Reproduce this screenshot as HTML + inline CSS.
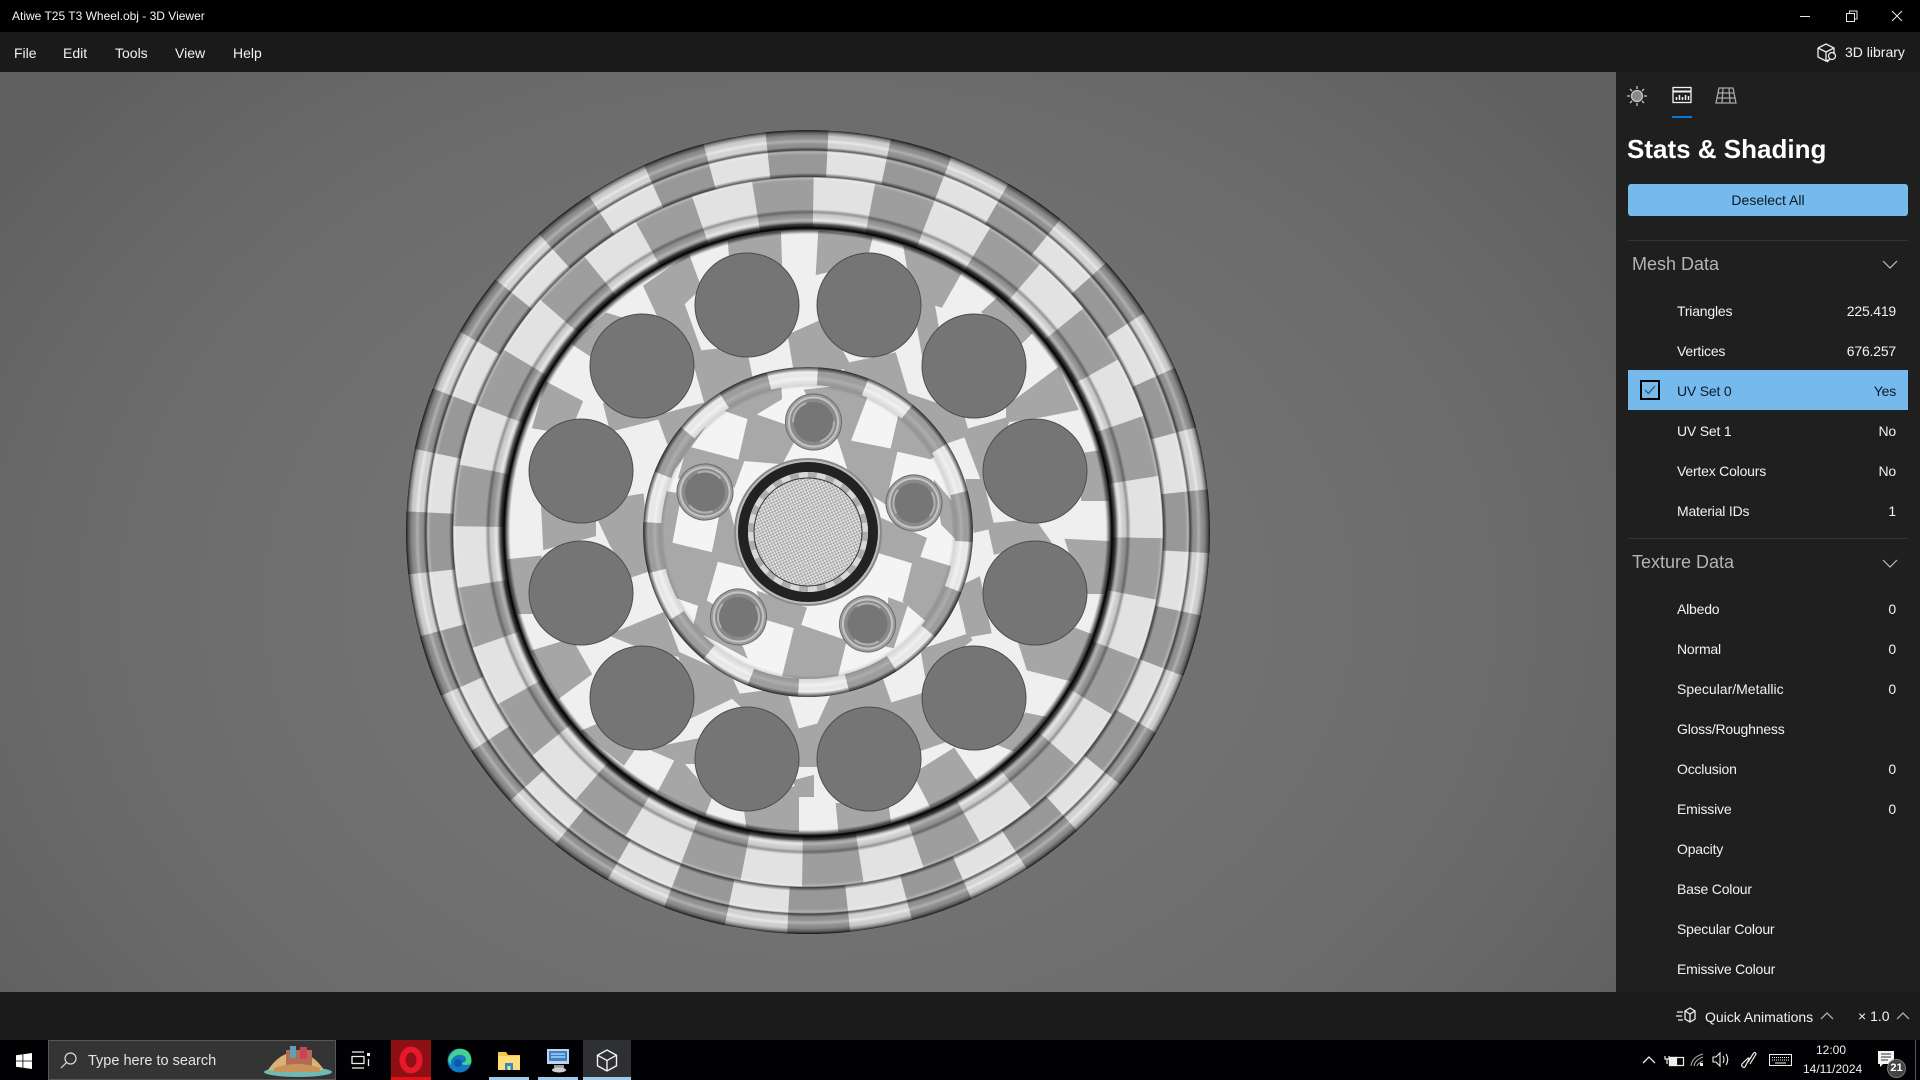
<!DOCTYPE html>
<html><head><meta charset="utf-8"><title>3D Viewer</title>
<style>
html,body{margin:0;padding:0;width:1920px;height:1080px;overflow:hidden;background:#000;font-family:"Liberation Sans",sans-serif}
.a{position:absolute}
.t{position:absolute;white-space:nowrap;line-height:20px;height:20px;font-size:14px;color:#f2f2f2}
.r{text-align:right;right:24px;letter-spacing:-.2px}
.l{left:1677px;letter-spacing:-.2px}
svg{position:absolute;overflow:visible}
</style></head><body>
<div class="a" style="left:0;top:0;width:1920px;height:32px;background:#000"></div>
<div class="t" style="left:12px;top:6px;font-size:12px;color:#f4f4f4">Atiwe T25 T3 Wheel.obj - 3D Viewer</div>
<svg style="left:0;top:0" width="1920" height="32" fill="none" stroke="#e8e8e8" stroke-width="1"><path d="M1800 16.5h10"/><path d="M1846.5 13.5h8v8h-8zM1849.5 13.5v-2.5h7.500v8h-2"/><path d="M1892 11l10 10M1902 11l-10 10"/></svg>

<div class="a" style="left:0;top:32px;width:1920px;height:40px;background:#1a1a1a"></div>
<div class="t" style="left:14px;top:43px">File</div>
<div class="t" style="left:63px;top:43px">Edit</div>
<div class="t" style="left:115px;top:43px">Tools</div>
<div class="t" style="left:175px;top:43px">View</div>
<div class="t" style="left:233px;top:43px">Help</div>
<svg style="left:1816px;top:42px" width="26" height="22" fill="none" stroke="#eee" stroke-width="1.300"><path d="M2 6l8-4 8 4v6M2 6v9l8 4 2-1M2 6l8 4 8-4M10 10v9"/><circle cx="16" cy="14" r="3.500"/><path d="M14 17l-3 3"/></svg>
<div class="t" style="left:1845px;top:42px">3D library</div>

<div class="a" style="left:0;top:72px;width:1616px;height:920px;background:radial-gradient(ellipse 1000px 760px at 808px 532px,#747474 0%,#717171 45%,#6a6a6a 75%,#5f5f5f 100%)"></div>

<svg style="left:0;top:0" width="1616" height="992" viewBox="0 0 1616 992">
<defs>
<radialGradient id="rim" gradientUnits="userSpaceOnUse" cx="808" cy="532" r="402">
<stop offset=".741" stop-color="#000" stop-opacity="0"/>
<stop offset=".749" stop-color="#000" stop-opacity=".5"/>
<stop offset=".756" stop-color="#000" stop-opacity="1"/>
<stop offset=".766" stop-color="#000" stop-opacity=".6"/>
<stop offset=".776" stop-color="#fff" stop-opacity=".2"/>
<stop offset=".789" stop-color="#000" stop-opacity=".1"/>
<stop offset=".796" stop-color="#000" stop-opacity=".35"/>
<stop offset=".803" stop-color="#000" stop-opacity="0"/>
<stop offset=".874" stop-color="#fff" stop-opacity="0"/>
<stop offset=".880" stop-color="#fff" stop-opacity=".25"/>
<stop offset=".884" stop-color="#000" stop-opacity=".6"/>
<stop offset=".893" stop-color="#000" stop-opacity="0"/>
<stop offset=".938" stop-color="#fff" stop-opacity="0"/>
<stop offset=".9455" stop-color="#fff" stop-opacity=".25"/>
<stop offset=".950" stop-color="#000" stop-opacity=".6"/>
<stop offset=".958" stop-color="#000" stop-opacity=".05"/>
<stop offset=".972" stop-color="#fff" stop-opacity=".25"/>
<stop offset=".985" stop-color="#000" stop-opacity=".1"/>
<stop offset=".9935" stop-color="#000" stop-opacity=".4"/>
<stop offset="1" stop-color="#000" stop-opacity=".85"/>
</radialGradient>
<radialGradient id="boss" gradientUnits="userSpaceOnUse" cx="808" cy="532" r="165">
<stop offset=".87" stop-color="#000" stop-opacity="0"/>
<stop offset=".885" stop-color="#000" stop-opacity=".1"/>
<stop offset=".93" stop-color="#fff" stop-opacity=".15"/>
<stop offset=".97" stop-color="#000" stop-opacity="0"/>
<stop offset="1" stop-color="#000" stop-opacity=".75"/>
</radialGradient>
<pattern id="mesh" width="4" height="4" patternUnits="userSpaceOnUse" patternTransform="rotate(20)">
<rect width="4" height="4" fill="#e4e4e4"/><rect width="2" height="2" fill="#a8a8a8"/><rect x="2" y="2" width="2" height="2" fill="#a8a8a8"/>
</pattern>
<clipPath id="cd"><circle cx="808" cy="532" r="302"/></clipPath>
<clipPath id="cb"><circle cx="808" cy="532" r="150"/></clipPath>
<g id="bolt">
<circle r="28" fill="#9c9c9c" stroke="#6a6a6a" stroke-width="1"/>
<circle r="24.500" fill="#8a8a8a" stroke="#c4c4c4" stroke-width="2"/>
<circle r="20" fill="#767676"/>
<circle r="20.500" fill="none" stroke="#b2b2b2" stroke-width="2" pathLength="360" stroke-dasharray="70 110"/>
</g>
</defs>

<circle cx="808" cy="532" r="402" fill="#989898"/>
<circle cx="808" cy="532" r="378.500" fill="none" stroke="#e2e2e2" stroke-width="47" pathLength="360" stroke-dasharray="9 9" stroke-dashoffset="-3"/>
<circle cx="808" cy="532" r="329.500" fill="none" stroke="#9e9e9e" stroke-width="51"/>
<circle cx="808" cy="532" r="329.500" fill="none" stroke="#e2e2e2" stroke-width="51" pathLength="360" stroke-dasharray="10 10" stroke-dashoffset="-11"/>
<circle cx="808" cy="532" r="304" fill="#efefef"/>

<g clip-path="url(#cd)" fill="#a6a6a6" stroke="#a6a6a6" stroke-width="8" stroke-linejoin="miter">
<polygon points="732,243 777,233 778,263 733,257"/>
<polygon points="648,287 687,260 697,287 678,305 660,313"/>
<polygon points="577,343 607,317 617,320 592,353"/>
<polygon points="662,312 680,303 697,350 690,360"/>
<polygon points="695,355 743,350 748,375 707,398"/>
<polygon points="792,337 823,323 845,363 837,368 797,367"/>
<polygon points="608,407 613,427 660,415 655,405"/>
<polygon points="662,418 703,407 683,440 670,440"/>
<polygon points="548,387 578,403 567,430 537,425"/>
<polygon points="822,235 868,240 863,260 820,270"/>
<polygon points="908,250 957,273 940,303 930,300 937,340 925,350"/>
<polygon points="997,303 1027,333 1020,340 987,312"/>
<polygon points="847,367 893,357 905,397 860,400"/>
<polygon points="1010,408 1057,373 1073,407 1043,413 1010,418"/>
<polygon points="907,397 960,415 965,433 945,440 925,450 900,420"/>
<polygon points="967,433 1005,422 985,480"/>
<polygon points="1083,457 1107,453 1110,497 1085,497"/>
<polygon points="970,483 980,483 990,525 977,528"/>
<polygon points="992,527 1033,523 1045,540 997,550"/>
<polygon points="510,563 537,560 530,610 520,610"/>
<polygon points="545,505 592,500 592,533 547,545"/>
<polygon points="595,505 640,498 647,568 632,573 613,543"/>
<polygon points="537,653 570,643 587,673 560,693"/>
<polygon points="618,635 662,617 675,652 643,645"/>
<polygon points="588,732 600,727 630,750 623,760"/>
<polygon points="663,790 678,762 708,797 703,810"/>
<polygon points="660,750 695,743 697,760 683,760"/>
<polygon points="683,658 728,678 735,693 693,713"/>
<polygon points="737,698 783,692 795,730 747,707"/>
<polygon points="797,733 820,727 837,690 880,682 888,705 840,712 820,763 797,763"/>
<polygon points="748,810 795,790 795,828 750,825"/>
<polygon points="798,783 810,780 810,793 800,793"/>
<polygon points="960,590 977,582 987,630 970,633"/>
<polygon points="1070,543 1107,545 1103,590 1085,590"/>
<polygon points="1023,645 1070,630 1088,637 1070,677 1030,667"/>
<polygon points="925,652 970,637 935,665 928,670"/>
<polygon points="890,707 920,698 940,740 920,747"/>
<polygon points="918,775 953,753 973,782 932,802"/>
<polygon points="1003,743 1027,717 1042,720 1013,747"/>
<polygon points="840,807 885,808 887,823 842,828"/>
</g>

<g fill="#757575" stroke="#4e4e4e" stroke-width="1">
<circle cx="747" cy="305" r="52"/><circle cx="869" cy="305" r="52"/>
<circle cx="974" cy="366" r="52"/><circle cx="1035" cy="471" r="52"/>
<circle cx="1035" cy="593" r="52"/><circle cx="974" cy="698" r="52"/>
<circle cx="869" cy="759" r="52"/><circle cx="747" cy="759" r="52"/>
<circle cx="642" cy="698" r="52"/><circle cx="581" cy="593" r="52"/>
<circle cx="581" cy="471" r="52"/><circle cx="642" cy="366" r="52"/>
</g>

<circle cx="808" cy="532" r="402" fill="url(#rim)"/>

<circle cx="808" cy="532" r="165" fill="#f4f4f4"/>
<g clip-path="url(#cb)" fill="#a8a8a8" stroke="#a8a8a8" stroke-width="8" stroke-linejoin="miter">
<polygon points="752,417 795,432 780,460 743,457"/>
<polygon points="810,393 867,387 847,440 830,430"/>
<polygon points="843,443 893,453 883,498 855,480"/>
<polygon points="903,413 943,445 930,455 895,447"/>
<polygon points="690,451 739,464 732,483 683,475"/>
<polygon points="662,418 703,403 690,420 700,428 677,460"/>
<polygon points="730,390 777,383 778,397 748,415 728,408"/>
<polygon points="665,545 715,557 702,603 665,590"/>
<polygon points="725,507 740,563 715,557"/>
<polygon points="883,523 922,540 915,560 882,550"/>
<polygon points="917,560 950,570 945,617 927,617 907,600"/>
<polygon points="940,493 960,517 957,535 945,523"/>
<polygon points="798,628 842,643 833,680 787,673"/>
<polygon points="763,597 802,610 797,625 770,617"/>
<polygon points="703,603 727,617 740,650 697,627"/>
<polygon points="892,603 903,607 890,647"/>
<polygon points="665,495 677,497 668,545 653,550 645,523"/>
</g>
<circle cx="808" cy="532" r="156" fill="none" stroke="#a0a0a0" stroke-width="18"/>
<circle cx="808" cy="532" r="156" fill="none" stroke="#efefef" stroke-width="18" pathLength="360" stroke-dasharray="18 18" stroke-dashoffset="-3.500"/>
<circle cx="808" cy="532" r="165" fill="url(#boss)"/>

<use href="#bolt" transform="translate(813.500 422)"/>
<use href="#bolt" transform="translate(705 492) rotate(70)"/>
<use href="#bolt" transform="translate(914 503) rotate(-30)"/>
<use href="#bolt" transform="translate(738.500 617) rotate(150)"/>
<use href="#bolt" transform="translate(867.500 624) rotate(60)"/>

<circle cx="808" cy="532" r="73" fill="#bcbcbc" stroke="#8a8a8a" stroke-width="2"/>
<circle cx="808" cy="532" r="65" fill="none" stroke="#222" stroke-width="10"/>
<circle cx="808" cy="532" r="57" fill="none" stroke="#d8d8d8" stroke-width="6"/>
<circle cx="808" cy="532" r="57" fill="none" stroke="#adadad" stroke-width="6" pathLength="360" stroke-dasharray="9 9"/>
<circle cx="808" cy="532" r="54" fill="url(#mesh)" stroke="#333" stroke-width="1"/>
</svg>

<div class="a" style="left:1616px;top:72px;width:304px;height:920px;background:#1f1f1f"></div>
<svg style="left:1625px;top:84px" width="120" height="36" fill="none" stroke="#c4c4c4" stroke-width="1.300">
<circle cx="12" cy="12" r="5.500" fill="#8a8a8a"/><path d="M12 2v3M12 19v3M2 12h3M19 12h3M5 5l2 2M17 17l2 2M5 19l2-2M17 7l2-2"/>
<rect x="48" y="3.500" width="18" height="15" stroke="#f2f2f2"/><path d="M48 7.500h18" stroke="#f2f2f2" stroke-width="2"/><path d="M51.500 16v-3M54.500 16v-5M57.500 16v-3M60.500 16v-5M63.500 16v-4" stroke="#f2f2f2" stroke-width="1.500"/>
<path d="M94 4h14l3 15H91zM93 9h16M92 14h18M98 4l-1 15M104 4l1 15" stroke="#a8a8a8"/>
</svg>
<div class="a" style="left:1672px;top:116px;width:20px;height:2px;background:#0a78d2"></div>
<div class="t" style="left:1627px;top:134px;height:30px;line-height:30px;font-size:26px;font-weight:bold;color:#fff">Stats &amp; Shading</div>
<div class="a" style="left:1628px;top:184px;width:280px;height:32px;background:#76b9ed;border-radius:3px"></div>
<div class="t" style="left:1628px;top:190px;width:280px;text-align:center;color:#0c1a26">Deselect All</div>
<div class="a" style="left:1628px;top:240px;width:280px;height:1px;background:#353535"></div>
<div class="t" style="left:1632px;top:254px;font-size:18px;color:#b4b4b4">Mesh Data</div>
<svg style="left:1882px;top:259px" width="16" height="12" fill="none" stroke="#bdbdbd" stroke-width="1.200"><path d="M1 2l7 7 7-7"/></svg>
<div class="a" style="left:1628px;top:538px;width:280px;height:1px;background:#353535"></div>
<div class="t" style="left:1632px;top:552px;font-size:18px;color:#b4b4b4">Texture Data</div>
<svg style="left:1882px;top:558px" width="16" height="12" fill="none" stroke="#bdbdbd" stroke-width="1.200"><path d="M1 2l7 7 7-7"/></svg>

<div class="a" style="left:1628px;top:370px;width:280px;height:40px;background:#76b9ed"></div>
<svg style="left:1640px;top:380px" width="20" height="20" fill="none"><rect x="1" y="1" width="18" height="18" stroke="#000" stroke-width="2"/><path d="M5 10l3.500 3.500L15 6" stroke="#2c4f6c" stroke-width="1.200"/></svg>

<div class="t l" style="top:301px">Triangles</div><div class="t r" style="top:301px">225.419</div>
<div class="t l" style="top:341px">Vertices</div><div class="t r" style="top:341px">676.257</div>
<div class="t l" style="top:381px;color:#0c1a26">UV Set 0</div><div class="t r" style="top:381px;color:#0c1a26">Yes</div>
<div class="t l" style="top:421px">UV Set 1</div><div class="t r" style="top:421px">No</div>
<div class="t l" style="top:461px">Vertex Colours</div><div class="t r" style="top:461px">No</div>
<div class="t l" style="top:501px">Material IDs</div><div class="t r" style="top:501px">1</div>
<div class="t l" style="top:599px">Albedo</div><div class="t r" style="top:599px">0</div>
<div class="t l" style="top:639px">Normal</div><div class="t r" style="top:639px">0</div>
<div class="t l" style="top:679px;letter-spacing:0">Specular/Metallic</div><div class="t r" style="top:679px">0</div>
<div class="t l" style="top:719px">Gloss/Roughness</div>
<div class="t l" style="top:759px">Occlusion</div><div class="t r" style="top:759px">0</div>
<div class="t l" style="top:799px">Emissive</div><div class="t r" style="top:799px">0</div>
<div class="t l" style="top:839px">Opacity</div>
<div class="t l" style="top:879px">Base Colour</div>
<div class="t l" style="top:919px">Specular Colour</div>
<div class="t l" style="top:959px">Emissive Colour</div>

<div class="a" style="left:0;top:992px;width:1920px;height:48px;background:#1b1b1b"></div>
<svg style="left:1676px;top:1006px" width="22" height="20" fill="none" stroke="#eee" stroke-width="1.300"><path d="M1 6h6M0 10h6M2 14h5"/><path d="M9 5l5-3 5 3v8l-5 3-5-3zM9 5l5 3 5-3M14 8v8"/></svg>
<div class="t" style="left:1705px;top:1007px">Quick Animations</div>
<svg style="left:1820px;top:1011px" width="14" height="10" fill="none" stroke="#bbb" stroke-width="1.200"><path d="M1 8l6-6 6 6"/></svg>
<div class="t" style="left:1858px;top:1006px">× 1.0</div>
<svg style="left:1896px;top:1011px" width="14" height="10" fill="none" stroke="#bbb" stroke-width="1.200"><path d="M1 8l6-6 6 6"/></svg>

<div class="a" style="left:0;top:1040px;width:1920px;height:40px;background:#020204"></div>
<svg style="left:16px;top:1053px" width="16" height="16" fill="#fff"><path d="M0 2.300l6.500-.9v6.200H0zM7.300 1.300L16 0v7.600H7.300zM0 8.400h6.500v6.200L0 13.700zM7.300 8.400H16V16l-8.700-1.300z"/></svg>
<div class="a" style="left:48px;top:1040px;width:288px;height:40px;box-sizing:border-box;background:#343434;border:1px solid #575757"></div>
<svg style="left:59px;top:1051px" width="20" height="20" fill="none" stroke="#ddd" stroke-width="1.200"><circle cx="11.500" cy="7.500" r="5.500"/><path d="M7.500 11.500L2 17"/></svg>
<div class="t" style="left:88px;top:1051px;font-size:14.500px;color:#e4e4e4">Type here to search</div>
<svg style="left:260px;top:1042px" width="74" height="36"><ellipse cx="38" cy="30" rx="34" ry="5" fill="#6fb9b4"/><path d="M8 28q12-18 28-18t28 18z" fill="#d9b27a"/><rect x="26" y="8" width="26" height="16" fill="#b66a50"/><rect x="30" y="4" width="6" height="12" fill="#5fa0b8"/><rect x="40" y="5" width="7" height="12" fill="#c6455a"/><path d="M14 26q24-8 46 0v4H14z" fill="#c8935a"/></svg>
<svg style="left:351px;top:1051px" width="20" height="18" fill="none" stroke="#eee" stroke-width="1.300"><path d="M1 1h12M1 17h12M1 5.500h12v7H1z"/><rect x="16" y="2" width="3" height="3" fill="#eee" stroke="none"/><path d="M17.500 8v7"/></svg>

<div class="a" style="left:391px;top:1040px;width:40px;height:40px;background:#8e1014"></div>
<div class="a" style="left:391px;top:1077px;width:40px;height:3px;background:#e3101a"></div>
<svg style="left:399px;top:1047px" width="24" height="26"><ellipse cx="12" cy="13" rx="8.500" ry="10.500" fill="none" stroke="#e5192a" stroke-width="6"/></svg>
<svg style="left:447px;top:1048px" width="25" height="25"><circle cx="12.500" cy="12.500" r="12" fill="#1478c8"/><path d="M2 9Q7 0 15 1q9 1 9.500 12 0 4-5 4-4 0-6-2 5 0 5.500-3.500C19 8 15 6 11 7 6 8 3 12 4 17 1 14 1 12 2 9z" fill="#47d18c"/><circle cx="11" cy="15" r="4" fill="#0d5aa8"/></svg>
<svg style="left:497px;top:1049px" width="24" height="22"><path d="M1 3h8l2 3h12v15H1z" fill="#f6c743"/><path d="M1 7h22v14H1z" fill="#ffdf75"/><path d="M8 21v-7h8v7h-2.500v-4h-3v4z" fill="#2e8ad8"/></svg>
<div class="a" style="left:489px;top:1077px;width:40px;height:3px;background:#9ccbee"></div>
<svg style="left:546px;top:1047px" width="24" height="26"><rect x="1" y="2" width="22" height="15" fill="#bcd4ee"/><rect x="3" y="4" width="18" height="10" fill="#3f7fc8"/><path d="M5 7h14M5 10h14" stroke="#a9d1f5" stroke-width="1.500"/><rect x="8" y="18" width="10" height="3" fill="#9a9a9a"/><ellipse cx="13" cy="23" rx="7" ry="2.500" fill="#cfcfcf"/></svg>
<div class="a" style="left:538px;top:1077px;width:40px;height:3px;background:#9ccbee"></div>
<div class="a" style="left:583px;top:1040px;width:48px;height:40px;background:#2f3033"></div>
<svg style="left:595px;top:1048px" width="24" height="25" fill="none" stroke="#f0f0f0" stroke-width="1.400"><path d="M12 2l9.500 5.200v10.600L12 23l-9.500-5.200V7.200zM2.500 7.200L12 12.500l9.500-5.300M12 12.500V23"/></svg>
<div class="a" style="left:583px;top:1077px;width:48px;height:3px;background:#9ccbee"></div>

<svg style="left:1640px;top:1052px" width="20" height="14" fill="none" stroke="#eee" stroke-width="1.300"><path d="M3 11l6-6 6 6"/></svg>
<svg style="left:1664px;top:1052px" width="20" height="18" fill="none" stroke="#eee" stroke-width="1.200"><rect x="5.500" y="5.500" width="14" height="8"/><rect x="5.500" y="5.500" width="7" height="8" fill="#eee"/><path d="M1 4v3h4V4M3 7v5"/></svg>
<svg style="left:1690px;top:1051px" width="16" height="18" fill="none" stroke="#aaa" stroke-width="1.100"><path d="M1 15Q2 6 13 3M4 15Q5 9 13 6M7 15q1-3 6-5"/><rect x="10" y="12" width="3" height="3" fill="#eee" stroke="none"/></svg>
<svg style="left:1712px;top:1051px" width="20" height="18" fill="none" stroke="#eee" stroke-width="1.100"><path d="M1 6h3l4-4v13l-4-4H1zM11 5q2 3.500 0 7M14 3q3.500 5.500 0 11"/></svg>
<svg style="left:1740px;top:1050px" width="20" height="20" fill="none" stroke="#eee" stroke-width="1.200"><path d="M3 17q-2-1-1-3l5-5q2-2 2 0l-4 8q-1 1-2 0M8 12l5-8q2-3 3 0l-6 10"/></svg>
<svg style="left:1769px;top:1052px" width="24" height="16" fill="none" stroke="#eee" stroke-width="1"><rect x=".5" y="2.500" width="22" height="11"/><path d="M3 5.500h17M3 8h17" stroke-dasharray="1 1"/><path d="M6 11h11"/></svg>
<div class="t" style="left:1816px;top:1040px;width:30px;text-align:center;font-size:12px;color:#f0f0f0">12:00</div>
<div class="t" style="left:1803px;top:1059px;width:56px;text-align:center;font-size:12px;color:#f0f0f0">14/11/2024</div>
<svg style="left:1878px;top:1051px" width="20" height="18"><path d="M0 0h16v13H5l-3 3v-3H0z" fill="#f4f4f4"/><path d="M3 3h10M3 6h10M3 9h7" stroke="#333" stroke-width="1"/></svg>
<div class="a" style="left:1887px;top:1059px;width:17px;height:17px;border-radius:50%;background:#444;border:1px solid #777"></div>
<div class="t" style="left:1887px;top:1058px;width:19px;text-align:center;font-size:11px;font-weight:bold;color:#fff">21</div>
<div class="a" style="left:1915px;top:1040px;width:1px;height:40px;background:#5a5a5a"></div>
</body></html>
